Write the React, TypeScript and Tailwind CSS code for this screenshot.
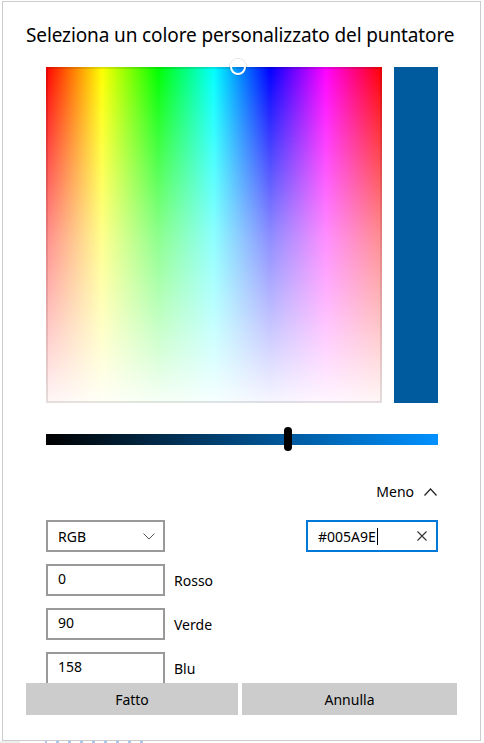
import React from "react";

const font = { fontFamily: '"Segoe UI", "Noto Sans", "Open Sans", sans-serif' };

function ChevronDown() {
  return (
    <svg width="12" height="7" viewBox="0 0 12 7" fill="none">
      <path d="M0.5 0.5 L6 6 L11.5 0.5" stroke="#555" strokeWidth="1" />
    </svg>
  );
}

function ChevronUp() {
  return (
    <svg width="13" height="8" viewBox="0 0 13 8" fill="none">
      <path d="M0.5 7.5 L6.5 1 L12.5 7.5" stroke="#222" strokeWidth="1.2" />
    </svg>
  );
}

function Cross() {
  return (
    <svg width="10" height="10" viewBox="0 0 10 10" fill="none">
      <path d="M0.5 0.5 L9.5 9.5 M9.5 0.5 L0.5 9.5" stroke="#333" strokeWidth="1.1" />
    </svg>
  );
}

function NumField({ value, label, last }: { value: string; label: string; last?: boolean }) {
  return (
    <div className={"flex items-start gap-[9px] " + (last ? "h-[32px]" : "")}>
      <div
        className={
          "w-[119px] h-[32px] border-2 border-[#999999] pl-[10px] text-[14px] leading-[26px] text-black " +
          (last ? "border-b-0" : "")
        }
      >
        {value}
      </div>
      <div className="text-[14px] leading-[20px] pt-[7px] text-black">{label}</div>
    </div>
  );
}

export default function App() {
  return (
    <div className="w-[484px] h-[743px] bg-white overflow-hidden" style={font}>
      <div className="ml-[2px] mt-[1px] w-[479px] h-[740px] border border-[#cccccc] bg-white flex flex-col">
        <div className="pl-[23px] pt-[19px] text-[19px] leading-[28px] text-black whitespace-nowrap tracking-[-0.12px]">
          Seleziona un colore personalizzato del puntatore
        </div>

        <div className="pl-[43px] mt-[18px] flex gap-[12px]">
          <div className="relative w-[336px] h-[336px] bg-[linear-gradient(to_right,#ff0000_0%,#ffff00_16.67%,#00ff00_33.33%,#00ffff_50%,#0000ff_66.67%,#ff00ff_83.33%,#ff0000_100%)]">
            <div className="absolute inset-0 bg-[linear-gradient(to_bottom,rgba(255,255,255,0)_0%,rgba(255,255,255,0.55)_50%,rgba(255,255,255,0.97)_100%)]" />
            <div className="absolute inset-0 border-2 border-black/10" />
            <div className="absolute left-[184px] top-[-8px] w-[16px] h-[16px] rounded-full border-2 border-white shadow-[0_0_0_1px_rgba(0,0,0,0.12)]" />
          </div>
          <div className="w-[44px] h-[336px] bg-[#005a9e]" />
        </div>

        <div className="pl-[43px] mt-[24px]">
          <div className="relative w-[392px] h-[24px] flex items-center">
            <div className="w-full h-[11px] bg-[linear-gradient(to_right,#000000,#0091ff)]" />
            <div className="absolute left-[238px] top-0 w-[8px] h-[24px] rounded-full bg-black" />
          </div>
        </div>

        <div className="mt-[30px] pr-[43px] flex justify-end items-center gap-[10px] h-[22px]">
          <span className="text-[14px] leading-[20px] text-black">Meno</span>
          <ChevronUp />
        </div>

        <div className="pl-[43px] pr-[42px] mt-[17px] flex justify-between">
          <div className="w-[119px] h-[32px] border-2 border-[#999999] flex items-center justify-between pl-[10px] pr-[8px] text-[14px] text-black">
            <span>RGB</span>
            <ChevronDown />
          </div>
          <div className="w-[132px] h-[32px] border-2 border-[#0078d7] flex items-center justify-between pl-[10px] pr-[9px] text-[14px] text-black">
            <span className="flex items-center">
              #005A9E<span className="inline-block w-[1px] h-[17px] bg-black ml-[1px]" />
            </span>
            <Cross />
          </div>
        </div>

        <div className="pl-[43px] mt-[12px] flex flex-col gap-[12px]">
          <NumField value="0" label="Rosso" />
          <NumField value="90" label="Verde" />
          <NumField value="158" label="Blu" last />
        </div>

        <div className="pl-[23px] flex gap-[4px] -mt-[1px]">
          <div className="w-[212px] h-[32px] bg-[#cccccc] flex items-center justify-center text-[14px] text-black">
            Fatto
          </div>
          <div className="w-[215px] h-[32px] bg-[#cccccc] flex items-center justify-center text-[14px] text-black">
            Annulla
          </div>
        </div>
      </div>
      <div className="h-[2px] flex">
        <div className="w-[20px] bg-[#eeeeee]" />
        <div className="ml-[25px] flex gap-[9px]">
          <div className="w-[2px] bg-[#a8c8ec]" />
          <div className="w-[3px] bg-[#a8c8ec]" />
          <div className="w-[3px] bg-[#a8c8ec]" />
          <div className="w-[3px] bg-[#a8c8ec]" />
          <div className="w-[3px] bg-[#a8c8ec]" />
          <div className="w-[3px] bg-[#a8c8ec]" />
          <div className="w-[3px] bg-[#a8c8ec]" />
          <div className="w-[3px] bg-[#a8c8ec]" />
          <div className="w-[3px] bg-[#a8c8ec]" />
        </div>
      </div>
    </div>
  );
}
